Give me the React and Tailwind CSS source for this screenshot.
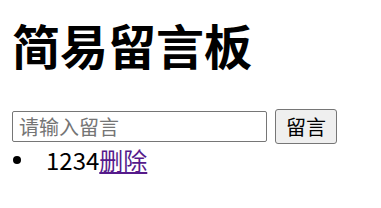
import React from 'react';

const App = () => {
  const font = { fontFamily: '"Noto Sans CJK SC", "Noto Sans", sans-serif' };

  return (
    <div className="bg-white px-[12px] pt-[20px] text-black" style={font}>
      <h1 className="text-[48px] font-bold leading-[48px]">简易留言板</h1>

      <div className="mt-[41px] flex items-center gap-[8px]">
        <input
          type="text"
          placeholder="请输入留言"
          className="h-[31px] w-[255px] rounded-[2px] border border-[#767676] px-[6px] text-[20px] leading-[26px] outline-none placeholder:text-[#757575]"
        />
        <button className="h-[35px] w-[62px] rounded-[3px] border border-[#767676] bg-[#efefef] text-[20px] leading-[26px]">
          留言
        </button>
      </div>

      {/* List */}
      <ul className="mt-[2px]">
        <li className="flex items-center text-[24px] leading-[28px]">
          <span className="ml-[1px] h-[8px] w-[8px] rounded-full bg-black" />
          <span className="ml-[25px]">1234</span>
          <a href="#" className="text-[#551a8b] underline">删除</a>
        </li>
      </ul>
    </div>
  );
};

export default App;
